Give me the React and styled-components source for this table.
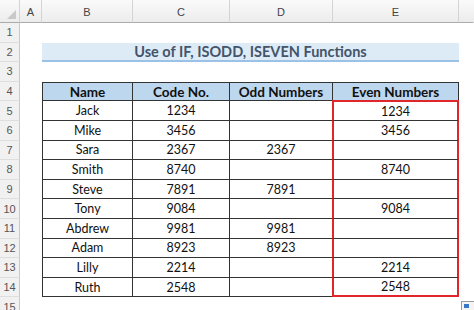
import React from "react";
import styled, { createGlobalStyle } from "styled-components";

const Global = createGlobalStyle`
  html, body { margin: 0; padding: 0; background: #fff; overflow: hidden; }
  body { font-family: "Liberation Sans", Arial, sans-serif; }
`;

const Sheet = styled.div`
  position: relative;
  display: grid;
  grid-template-columns: 20px 22px 91px 97px 103px 126px 1fr;
  grid-template-rows: 23px;
  grid-auto-rows: 19.6px;
  width: 474px;
  height: 310px;
  overflow: hidden;
  background: #fff;
`;

const Corner = styled.div`
  position: relative;
  background: linear-gradient(#fafafa, #ececec);
  border-right: 1px solid #d4d4d4;
  border-bottom: 1px solid #ababab;
  box-sizing: border-box;
  &::after {
    content: "";
    position: absolute;
    right: 3px;
    bottom: 3px;
    width: 0;
    height: 0;
    border-left: 9px solid transparent;
    border-bottom: 9px solid #c9c9c9;
  }
`;

const ColHead = styled.div`
  display: flex;
  align-items: center;
  justify-content: center;
  background: linear-gradient(#fafafa, #ececec);
  border-right: 1px solid ${(p) => (p.$last ? "transparent" : "#d4d4d4")};
  border-bottom: 1px solid #ababab;
  box-sizing: border-box;
  font-size: 11px;
  color: #444;
  padding-top: 1px;
`;

const RowHead = styled.div`
  display: flex;
  align-items: center;
  justify-content: center;
  background: #f1f1f1;
  border-right: 1px solid #c8c8c8;
  border-bottom: 1px solid #dedede;
  box-sizing: border-box;
  font-size: 11px;
  color: #555;
`;

const Blank = styled.div`
  grid-column: ${(p) => p.$span || "auto"};
`;

const Title = styled.div`
  grid-column: 3 / span 4;
  display: flex;
  align-items: center;
  justify-content: center;
  background: #ddebf7;
  border-bottom: 2px solid #9bc2e6;
  box-sizing: border-box;
  font-family: Lato, "Liberation Sans", sans-serif;
  font-weight: 700;
  font-size: 14.5px;
  color: #44546a;
  padding-top: 1px;
`;

const Cell = styled.div`
  display: flex;
  align-items: center;
  justify-content: center;
  box-sizing: border-box;
  font-family: Lato, "Liberation Sans", sans-serif;
  font-size: 12.5px;
  color: #111;
  background: ${(p) => (p.$head ? "#bdd7ee" : "#fff")};
  font-weight: ${(p) => (p.$head ? 700 : 400)};
  font-size: ${(p) => (p.$head ? "13.5px" : "12.5px")};
  border-right: 1px solid #333;
  border-bottom: 1px solid #333;
  border-left: ${(p) => (p.$first ? "1px solid #333" : "none")};
  border-top: ${(p) => (p.$head ? "1px solid #333" : "none")};
`;

const RedCell = styled(Cell)`
  border-left: 2px solid #e0262b;
  border-right: 2px solid #e0262b;
  border-top: ${(p) => (p.$top ? "2px solid #e0262b" : "none")};
  border-bottom: ${(p) => (p.$bottom ? "2px solid #e0262b" : "1px solid #333")};
  margin-left: -1px;
  margin-top: ${(p) => (p.$top ? "-1px" : "0")};
`;

const PasteIcon = styled.div`
  position: absolute;
  left: 461px;
  top: 301px;
  width: 14px;
  height: 12px;
  border: 1px solid #9a9a9a;
  background: #f4f4f4;
  box-sizing: border-box;
  &::after {
    content: "";
    position: absolute;
    left: 2px;
    top: 2px;
    width: 5px;
    height: 4px;
    background: #3a76c4;
  }
`;

const rows = [
  ["Jack", "1234", "", "1234"],
  ["Mike", "3456", "", "3456"],
  ["Sara", "2367", "2367", ""],
  ["Smith", "8740", "", "8740"],
  ["Steve", "7891", "7891", ""],
  ["Tony", "9084", "", "9084"],
  ["Abdrew", "9981", "9981", ""],
  ["Adam", "8923", "8923", ""],
  ["Lilly", "2214", "", "2214"],
  ["Ruth", "2548", "", "2548"],
];

export default function App() {
  const letters = ["A", "B", "C", "D", "E", ""];
  return (
    <>
      <Global />
      <Sheet>
        <Corner />
        {letters.map((l, i) => (
          <ColHead key={i} $last={i === letters.length - 1}>
            {l}
          </ColHead>
        ))}

        <RowHead>1</RowHead>
        <Blank $span="span 6" />

        <RowHead>2</RowHead>
        <Blank />
        <Title>Use of IF, ISODD, ISEVEN Functions</Title>
        <Blank />

        <RowHead>3</RowHead>
        <Blank $span="span 6" />

        <RowHead>4</RowHead>
        <Blank />
        <Cell $head $first>Name</Cell>
        <Cell $head>Code No.</Cell>
        <Cell $head>Odd Numbers</Cell>
        <Cell $head>Even Numbers</Cell>
        <Blank />

        {rows.map((r, i) => (
          <React.Fragment key={r[0]}>
            <RowHead>{i + 5}</RowHead>
            <Blank />
            <Cell $first>{r[0]}</Cell>
            <Cell>{r[1]}</Cell>
            <Cell>{r[2]}</Cell>
            <RedCell $top={i === 0} $bottom={i === rows.length - 1}>
              {r[3]}
            </RedCell>
            <Blank />
          </React.Fragment>
        ))}

        <RowHead>15</RowHead>
        <Blank $span="span 6" />
        <PasteIcon />
      </Sheet>
    </>
  );
}
